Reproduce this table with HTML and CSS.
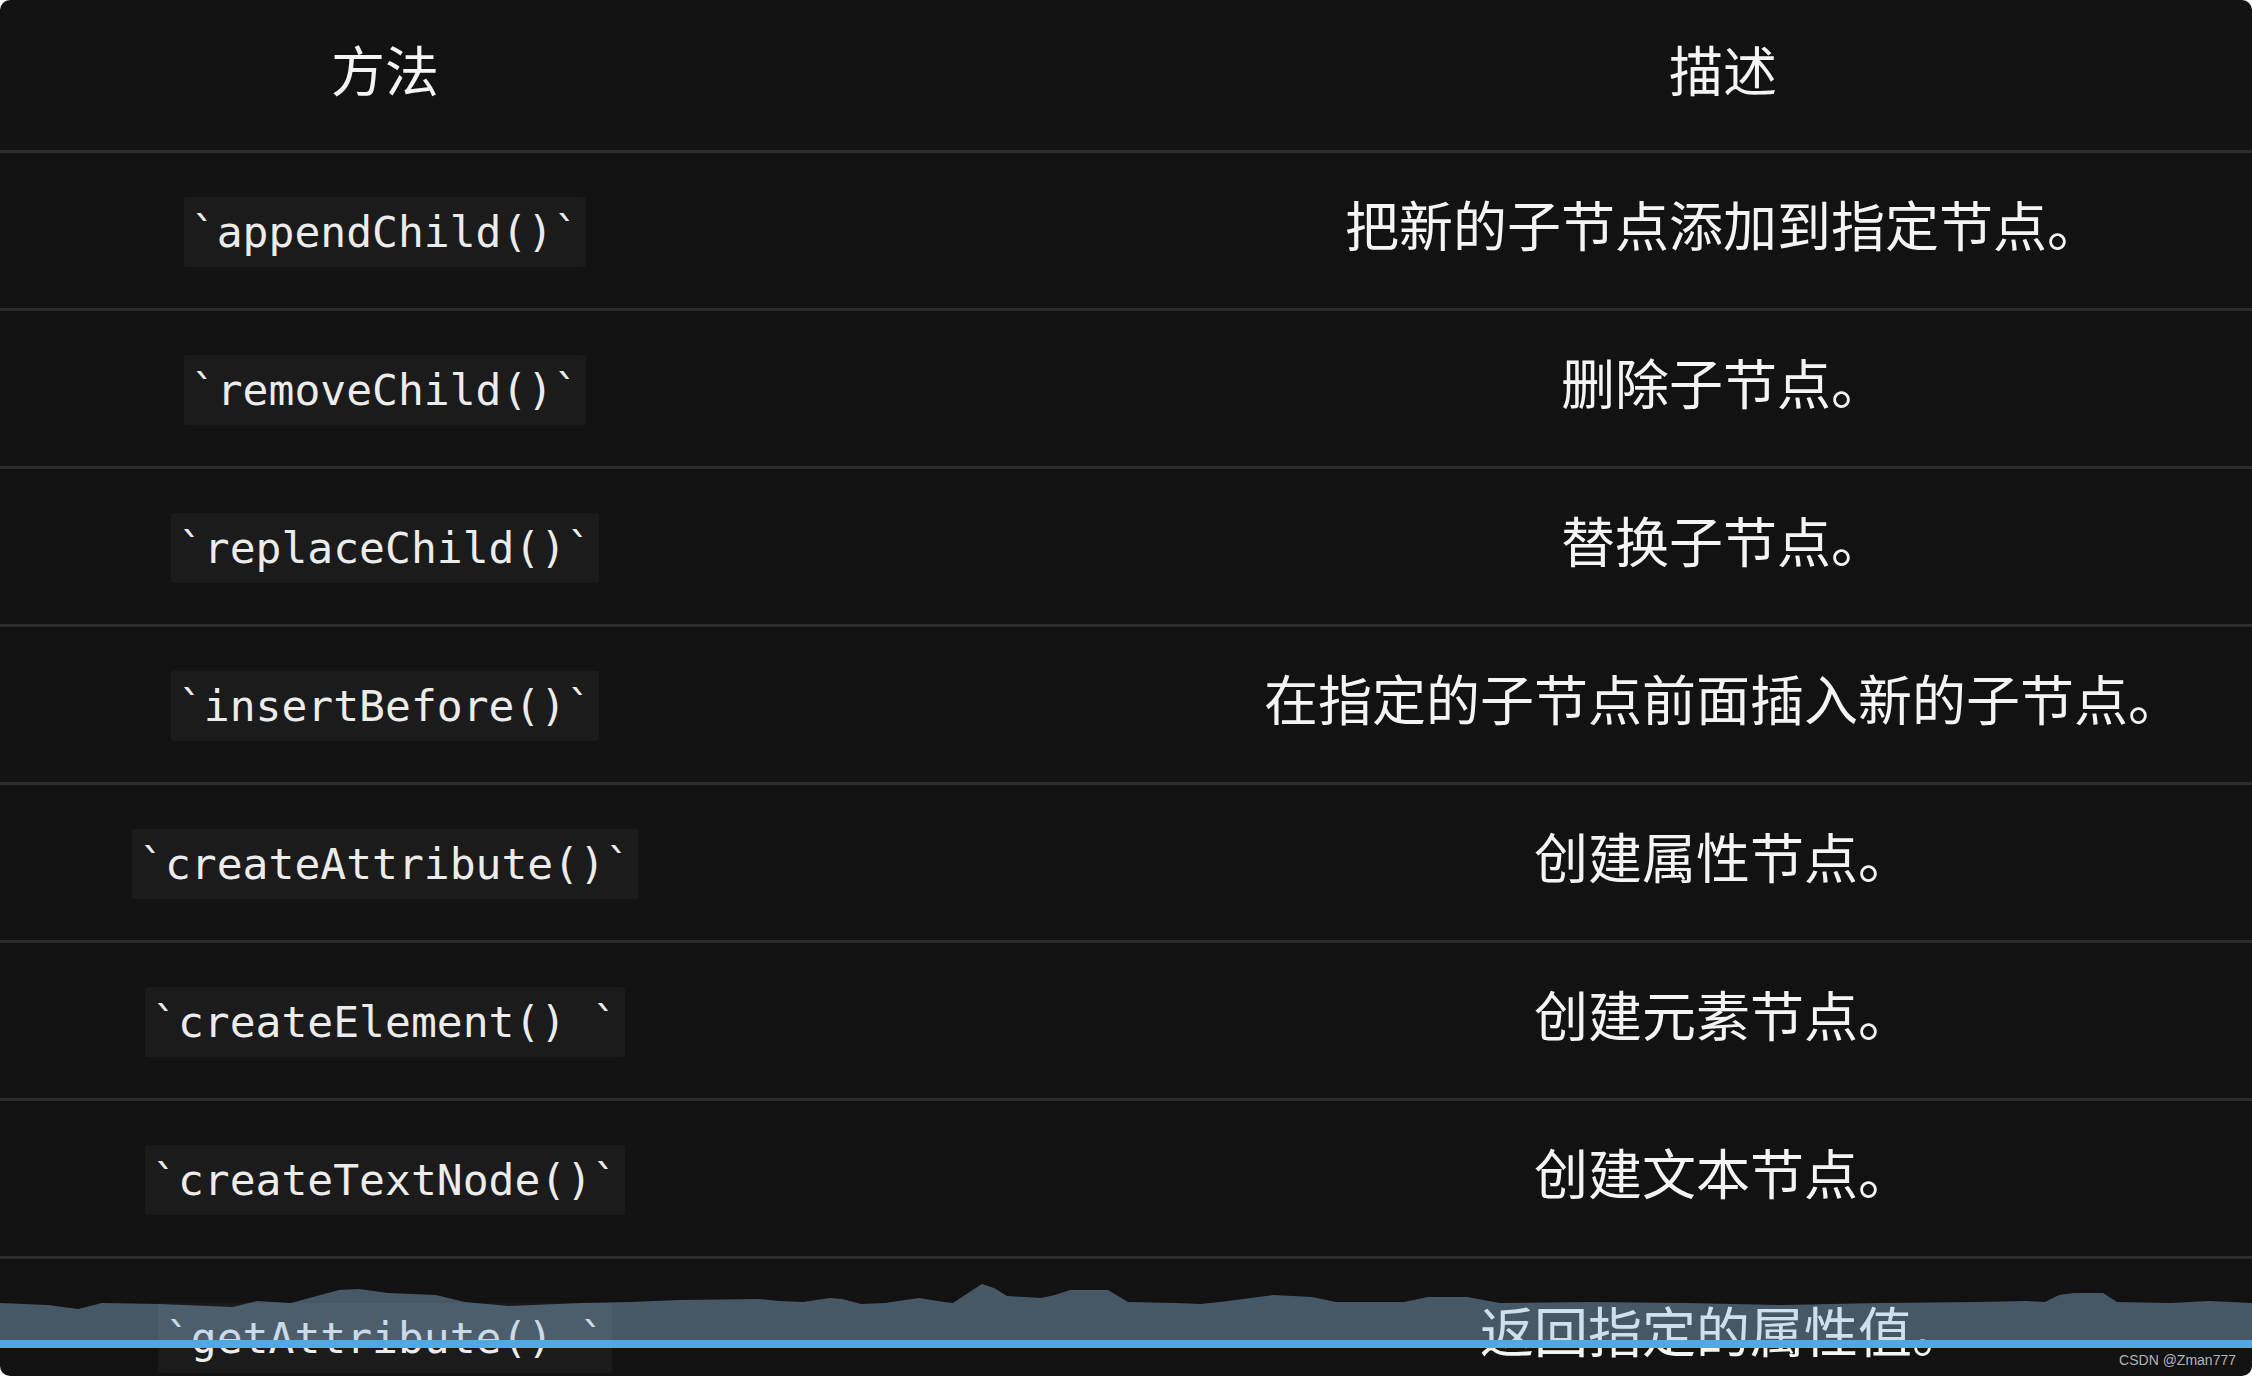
FILE: index.html
```html
<!DOCTYPE html>
<html lang="zh-CN">

<head>
    <meta charset="UTF-8">
    <meta name="viewport" content="width=device-width, initial-scale=1.0">
    <title>DOM 节点方法</title>
    <link rel="stylesheet" href="styles.css">
</head>

<body>

    <div class="frame">
        <div class="table">
            <div class="row head">
                <div class="cell">方法</div>
                <div class="cell">描述</div>
            </div>
            <div class="row">
                <div class="cell"><code>`appendChild()`</code></div>
                <div class="cell">把新的子节点添加到指定节点。</div>
            </div>
            <div class="row">
                <div class="cell"><code>`removeChild()`</code></div>
                <div class="cell">删除子节点。</div>
            </div>
            <div class="row">
                <div class="cell"><code>`replaceChild()`</code></div>
                <div class="cell">替换子节点。</div>
            </div>
            <div class="row">
                <div class="cell"><code>`insertBefore()`</code></div>
                <div class="cell">在指定的子节点前面插入新的子节点。</div>
            </div>
            <div class="row">
                <div class="cell"><code>`createAttribute()`</code></div>
                <div class="cell">创建属性节点。</div>
            </div>
            <div class="row">
                <div class="cell"><code>`createElement() `</code></div>
                <div class="cell">创建元素节点。</div>
            </div>
            <div class="row">
                <div class="cell"><code>`createTextNode()`</code></div>
                <div class="cell">创建文本节点。</div>
            </div>
            <div class="row">
                <div class="cell"><code>`getAttribute() `</code></div>
                <div class="cell">返回指定的属性值。</div>
            </div>
        </div>

        <!-- video player progress bar with the audio wave over the last row -->
        <svg class="player" width="2252" height="68" viewBox="0 0 2252 68">
            <path class="wave" d="M0 23 L48 25 L78 29 L102 23 L160 24 L233 27 L257 21 L291 23 L339 10 L359 9 L388 13 L436 15 L465 22 L509 26 L582 23 L630 22 L679 20 L760 19 L779 21 L803 22 L830 18 L842 19 L861 24 L885 23 L919 18 L944 22 L953 23 L968 13 L982 4 L994 8 L1007 16 L1041 18 L1055 15 L1070 10 L1108 10 L1128 22 L1176 23 L1200 24 L1220 22 L1273 15 L1312 17 L1336 22 L1404 22 L1428 17 L1467 17 L1500 23 L1589 22 L1686 23 L1783 25 L1880 23 L1977 22 L2025 21 L2045 22 L2059 15 L2074 13 L2103 13 L2117 22 L2171 23 L2209 21 L2252 23 L2252 60 L0 60 Z" />
            <rect class="bar" x="0" y="60" width="2252" height="8" />
        </svg>

        <span class="mark">CSDN @Zman777</span>
    </div>

</body>

</html>
```

FILE: styles.css
```css
body {
    margin: 0;
    background-color: #ffffff;
}

.frame {
    position: relative;
    width: 2252px;
    height: 1376px;
    border-radius: 10px;
    overflow: hidden;
    background-color: #121212;
    color: #f4f4f4;
    font-family: 'Noto Sans CJK SC', sans-serif;
}

.table {
    width: 2676px;
}

.row {
    display: grid;
    grid-template-columns: 770px 1906px;
    align-items: center;
    height: 155px;
    border-bottom: 3px solid #2c2c2c;
}

.row.head {
    height: 150px;
}

.cell {
    text-align: center;
    font-size: 54px;
    padding-bottom: 14px;
}

.cell code {
    font-family: 'DejaVu Sans Mono', monospace;
    font-size: 43px;
    line-height: 50px;
    color: #ececec;
    background-color: #1b1b1b;
    padding: 10px 7px;
    border-radius: 3px;
    white-space: pre;
}

.player {
    position: absolute;
    left: 0;
    bottom: 28px;
    display: block;
}

.player .wave {
    fill: rgba(150, 193, 228, 0.4);
}

.player .bar {
    fill: #4eaae4;
}

.mark {
    position: absolute;
    right: 16px;
    bottom: 8px;
    font-family: 'Liberation Sans', Arial, sans-serif;
    font-size: 14px;
    color: #b4b4b4;
}
```
